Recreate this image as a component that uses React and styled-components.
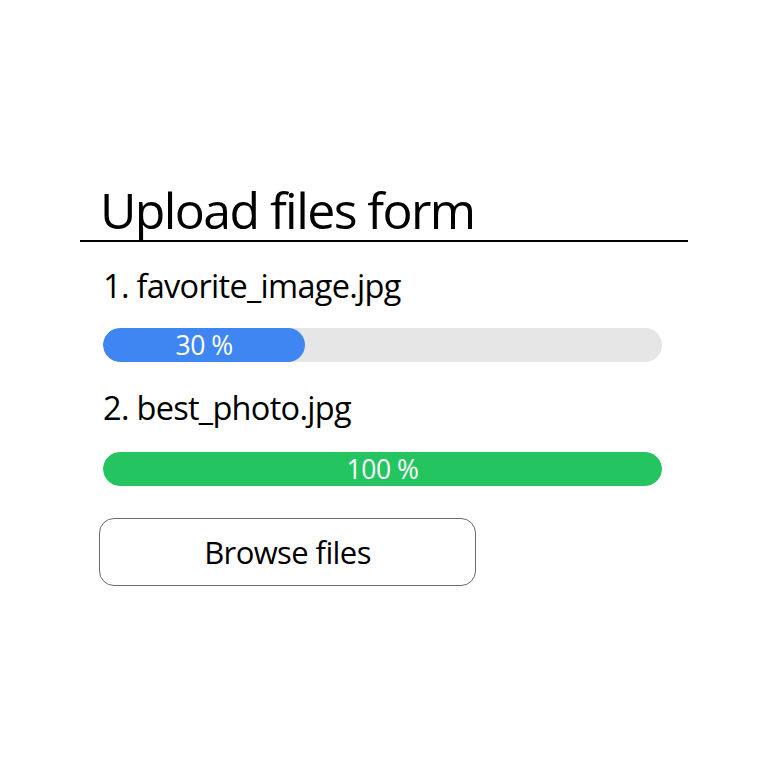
import React from "react";
import styled, { createGlobalStyle } from "styled-components";

const Global = createGlobalStyle`
  html, body { margin: 0; padding: 0; background: #ffffff; }
  body { font-family: "Open Sans", "Liberation Sans", sans-serif; color: #000; }
`;

const Page = styled.div`
  width: 768px;
  height: 768px;
  box-sizing: border-box;
  padding: 180px 0 0 80px;
`;

const Form = styled.div`
  width: 608px;
  display: flex;
  flex-direction: column;
`;

const Title = styled.h1`
  margin: 0;
  padding: 0 0 0 20px;
  font-size: 50px;
  font-weight: 400;
  line-height: 60px;
  letter-spacing: -1.6px;
  border-bottom: 2px solid #000;
  height: 62px;
  box-sizing: border-box;
`;

const Body = styled.div`
  display: flex;
  flex-direction: column;
  padding-left: 23px;
`;

const FileName = styled.div`
  font-size: 32.5px;
  line-height: 40px;
  letter-spacing: -0.7px;
  margin-top: ${(p) => p.$top}px;
`;

const Track = styled.div`
  width: 559px;
  height: 34px;
  border-radius: 17px;
  background: #e6e6e6;
  margin-top: ${(p) => p.$top}px;
  display: flex;
  overflow: hidden;
`;

const Fill = styled.div`
  height: 100%;
  border-radius: 17px;
  background: ${(p) => p.$color};
  color: #fff;
  font-size: 26.5px;
  letter-spacing: -0.5px;
  display: flex;
  align-items: center;
  justify-content: center;
`;

const Button = styled.button`
  margin: 32px 0 0 -4px;
  width: 377px;
  height: 68px;
  border: 1.3px solid #6a6a6a;
  border-radius: 15px;
  background: #fff;
  font-family: "Open Sans", "Liberation Sans", sans-serif;
  font-size: 31px;
  letter-spacing: -0.6px;
  color: #000;
  padding: 0;
`;

const files = [
  { name: "1. favorite_image.jpg", pct: 30, width: 36.2, color: "#3f86f2", top: 24, barTop: 22 },
  { name: "2. best_photo.jpg", pct: 100, width: 100, color: "#24c561", top: 26, barTop: 24 },
];

export default function App() {
  return (
    <Page>
      <Global />
      <Form>
        <Title>Upload files form</Title>
        <Body>
          {files.map((f) => (
            <React.Fragment key={f.name}>
              <FileName $top={f.top}>{f.name}</FileName>
              <Track $top={f.barTop}>
                <Fill $color={f.color} style={{ width: `${f.width}%` }}>
                  {f.pct} %
                </Fill>
              </Track>
            </React.Fragment>
          ))}
          <Button>Browse files</Button>
        </Body>
      </Form>
    </Page>
  );
}
